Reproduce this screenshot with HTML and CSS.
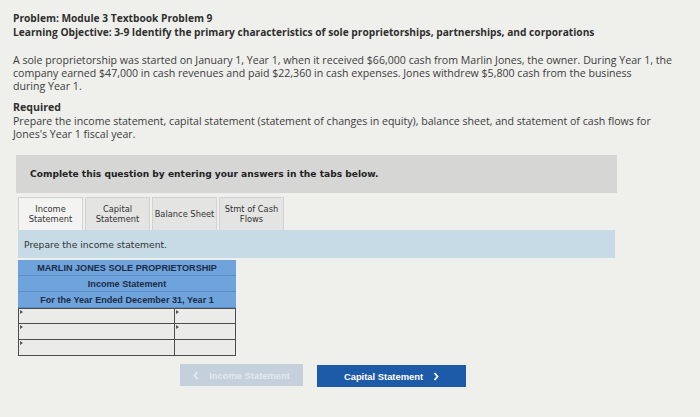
FILE: index.html
```html
<!DOCTYPE html>
<html>
<head>
<meta charset="utf-8">
<link rel="stylesheet" href="styles.css">
</head>
<body>
<div class="page">
  <div class="head">
    <div class="title">Problem: Module 3 Textbook Problem 9</div>
    <div class="title">Learning Objective: 3-9 Identify the primary characteristics of sole proprietorships, partnerships, and corporations</div>
  </div>
  <p class="para">A sole proprietorship was started on January 1, Year 1, when it received $66,000 cash from Marlin Jones, the owner. During Year 1, the company earned $47,000 in cash revenues and paid $22,360 in cash expenses. Jones withdrew $5,800 cash from the business<br>during Year 1.</p>
  <div class="req">Required</div>
  <p class="para req-text">Prepare the income statement, capital statement (statement of changes in equity), balance sheet, and statement of cash flows for Jones's Year 1 fiscal year.</p>

  <div class="complete">Complete this question by entering your answers in the tabs below.</div>

  <div class="tabs">
    <div class="tab active">Income<br>Statement</div>
    <div class="tab">Capital<br>Statement</div>
    <div class="tab">Balance Sheet</div>
    <div class="tab">Stmt of Cash<br>Flows</div>
  </div>
  <div class="instr">Prepare the income statement.</div>

  <div class="sheet">
    <div class="hrow">MARLIN JONES SOLE PROPRIETORSHIP</div>
    <div class="hrow">Income Statement</div>
    <div class="hrow">For the Year Ended December 31, Year 1</div>
    <div class="irow first"><div class="c1"><span class="mark"></span></div><div class="c2"><span class="mark"></span></div></div>
    <div class="irow"><div class="c1"><span class="mark"></span></div><div class="c2"><span class="mark"></span></div></div>
    <div class="irow"><div class="c1"><span class="mark"></span></div><div class="c2"></div></div>
  </div>

  <div class="nav">
    <div class="btn prev"><svg class="chev-l" width="6" height="9" viewBox="0 0 6 9"><polyline points="4.5,1 1.5,4.5 4.5,8" fill="none" stroke="#e6ebf1" stroke-width="1.6"/></svg>Income Statement</div>
    <div class="btn next">Capital Statement<svg class="chev-r" width="6" height="9" viewBox="0 0 6 9"><polyline points="1.5,1 4.5,4.5 1.5,8" fill="none" stroke="#ffffff" stroke-width="1.8"/></svg></div>
  </div>
</div>
</body>
</html>
```
FILE: styles.css
```css
html, body {
  margin: 0;
  padding: 0;
  background: #efefec;
}
.page {
  width: 700px;
  height: 417px;
  padding: 11px 0 0 13px;
  box-sizing: border-box;
  font-family: "Open Sans", "Liberation Sans", sans-serif;
  color: #3d3d3d;
  font-size: 10.6px;
  overflow: hidden;
}
.title {
  font-weight: 700;
  font-size: 10.2px;
  line-height: 14px;
  color: #2f2f2f;
}
.head { margin-bottom: 15px; }
.para {
  margin: 0;
  line-height: 13px;
  width: 674px;
}
.req {
  margin-top: 8px;
  font-weight: 700;
  line-height: 13px;
  color: #2f2f2f;
}
.req-text {
  margin-top: 1px;
  width: 650px;
  line-height: 12.5px;
}
.complete {
  margin: 15px 0 0 3px;
  width: 601px;
  height: 38px;
  box-sizing: border-box;
  padding-left: 14px;
  display: flex;
  align-items: center;
  background: #d6d6d5;
  font-family: "DejaVu Sans", Verdana, sans-serif;
  font-weight: 700;
  font-size: 9.1px;
  color: #222;
}
.tabs {
  display: flex;
  gap: 2px;
  margin: 4px 0 0 5px;
}
.tab {
  width: 65px;
  height: 33px;
  box-sizing: border-box;
  background: #e4e4e3;
  border: 1px solid #d2d2d2;
  border-bottom: none;
  display: flex;
  align-items: center;
  justify-content: center;
  text-align: center;
  font-family: "DejaVu Sans", Verdana, sans-serif;
  font-size: 8.3px;
  line-height: 10.5px;
  color: #333;
}
.tab.active { background: #f3f3f2; }
.instr {
  margin-left: 5px;
  width: 597px;
  height: 28px;
  box-sizing: border-box;
  padding-left: 6px;
  display: flex;
  align-items: center;
  background: #c7dbe7;
  font-family: "DejaVu Sans", Verdana, sans-serif;
  font-size: 9.2px;
  color: #333;
}
.sheet {
  margin: 2px 0 0 5px;
  width: 218px;
  font-family: "Liberation Sans", Arial, sans-serif;
  font-size: 9.1px;
  font-weight: 700;
  color: #1c2b44;
}
.hrow {
  height: 16px;
  background: #6fa3dc;
  border-bottom: 1px solid #5b8dc7;
  box-sizing: border-box;
  display: flex;
  align-items: center;
  justify-content: center;
}
.irow {
  display: flex;
  height: 16px;
  border: 1px solid #4d4d4f;
  border-top: none;
  box-sizing: border-box;
}
.irow.first { border-top: 1px solid #4d4d4f; }
.c1 {
  width: 155px;
  border-right: 1px solid #4d4d4f;
  background: #ebebea;
  position: relative;
}
.c2 {
  flex: 1;
  background: #ebebea;
  position: relative;
}
.mark {
  position: absolute;
  left: 1px;
  top: 1px;
  width: 0;
  height: 0;
  border-top: 2px solid transparent;
  border-bottom: 2px solid transparent;
  border-left: 3px solid #555;
}
.nav {
  display: flex;
  align-items: flex-start;
  gap: 14px;
  margin: 8px 0 0 167px;
}
.btn {
  height: 22px;
  display: flex;
  align-items: center;
  justify-content: center;
  font-family: "Liberation Sans", Arial, sans-serif;
  font-weight: 700;
  font-size: 9.4px;
}
.prev {
  width: 123px;
  background: #c4d0dc;
  color: #e2e8ef;
}
.next {
  width: 149px;
  background: #1d5aa8;
  color: #fff;
  margin-top: 1px;
}
.chev-l { margin-right: 10px; }
.chev-r { margin-left: 10px; }
```
